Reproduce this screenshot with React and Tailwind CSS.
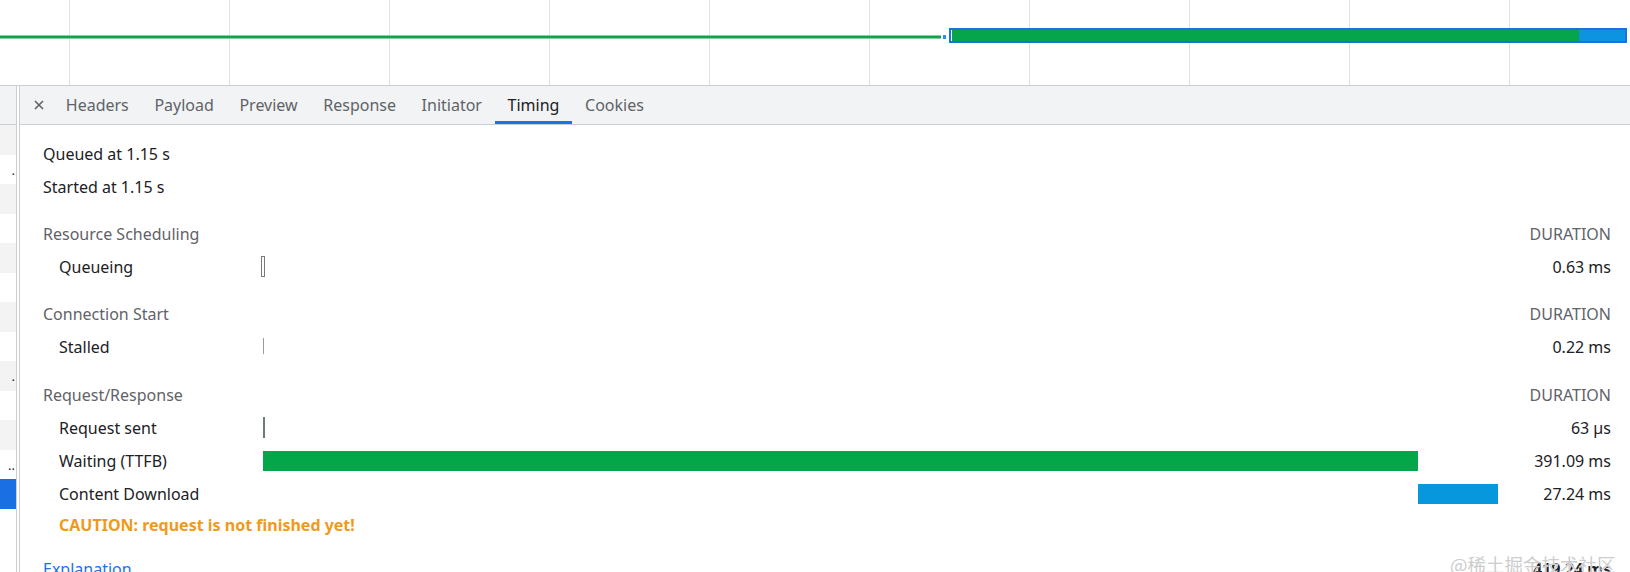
import React from "react";

const FONT = { fontFamily: '"Noto Sans", "Open Sans", sans-serif' };

const gridXs = [69, 229, 389, 549, 709, 869, 1029, 1189, 1349, 1509];

function Overview() {
  return (
    <div className="relative h-[86px] w-full border-b border-[#cacdd1] bg-white">
      {gridXs.map((x) => (
        <div
          key={x}
          className="absolute top-0 h-full w-px bg-[#e3e3e3]"
          style={{ left: x }}
        />
      ))}
      {/* request line before selected */}
      <div className="absolute left-0 top-[35px] h-[4px] w-[941px] border-y border-[#7fd19f] bg-[#14a04c]" />
      <div className="absolute left-[943px] top-[35px] h-[4px] w-[3px] bg-[#2d8cf0]" />
      {/* selected request bar */}
      <div className="absolute left-[949px] top-[28px] flex h-[15px] w-[678px] border-2 border-[#1f6fe0] bg-[#1f6fe0]">
        <div className="w-px bg-white" />
        <div className="h-full flex-1 bg-[#05a64b]" />
        <div className="h-full w-[46px] bg-[#0d94e0]" />
      </div>
    </div>
  );
}

function Strip() {
  const rows = [];
  for (let i = 0; i < 13; i++) {
    const selected = i === 12;
    const gray = i % 2 === 0;
    const dot = i === 1 ? "." : i === 8 ? "." : i === 11 ? ".." : "";
    rows.push(
      <div
        key={i}
        className={
          "relative h-[29.5px] " +
          (selected ? "bg-[#1a6fe3]" : gray ? "bg-[#f3f3f3]" : "bg-white")
        }
      >
        {dot && (
          <span className="absolute right-[1px] top-[9px] text-[13px] leading-none text-[#202124]">
            {dot}
          </span>
        )}
      </div>
    );
  }
  return (
    <div className="flex w-[17px] shrink-0 flex-col border-r border-[#cacdd1] bg-white">
      <div className="h-[39px] shrink-0 border-b border-[#cacdd1] bg-[#f1f3f4]" />
      {rows}
    </div>
  );
}

const tabs = ["Headers", "Payload", "Preview", "Response", "Initiator", "Timing", "Cookies"];

function TabBar() {
  return (
    <div className="flex h-[39px] shrink-0 items-stretch border-b border-[#cacdd1] bg-[#f1f3f4]">
      <div className="flex w-[33px] items-center justify-end pr-[9px]">
        <svg width="10" height="10" viewBox="0 0 10 10">
          <path d="M1 1 L9 9 M9 1 L1 9" stroke="#5f6368" strokeWidth="1.6" />
        </svg>
      </div>
      {tabs.map((t) => {
        const active = t === "Timing";
        return (
          <div
            key={t}
            className={
              "relative flex items-center px-[12.8px] text-[16px] " +
              (active ? "text-[#202124]" : "text-[#5f6368]")
            }
          >
            {t}
            {active && (
              <div className="absolute bottom-0 left-0 right-0 h-[3px] bg-[#1a73e8]" />
            )}
          </div>
        );
      })}
    </div>
  );
}

const TOTAL = 419.24;
const BAR_W = 1238;

function Bar({ kind, start, dur }) {
  const left = (start / TOTAL) * BAR_W;
  const width = (dur / TOTAL) * BAR_W;
  if (kind === "queue") {
    return (
      <div
        className="absolute top-[6px] h-[21px] w-[4px] border border-[#7a7a7a] bg-white"
        style={{ left: left - 2 }}
      />
    );
  }
  if (kind === "stall") {
    return (
      <div
        className="absolute top-[8px] h-[16px] w-px bg-[#9a9a9a]"
        style={{ left: left }}
      />
    );
  }
  if (kind === "sent") {
    return (
      <div
        className="absolute top-[6px] h-[21px] w-[2px] bg-[#6b7b78]"
        style={{ left: left }}
      />
    );
  }
  return (
    <div
      className={
        "absolute top-[7px] h-[20px] " +
        (kind === "wait" ? "bg-[#04a64a]" : "bg-[#0797dc]")
      }
      style={{ left: left, width: width }}
    />
  );
}

function Row({ label, bar, value }) {
  return (
    <div className="flex h-[33px] items-center text-[16px] text-[#202124]">
      <div className="w-[220px] shrink-0 pl-[16px]">{label}</div>
      <div className="relative h-full flex-1">{bar}</div>
      <div className="w-[110px] shrink-0 text-right">{value}</div>
    </div>
  );
}

function Section({ title, mt }) {
  return (
    <div
      className={
        "flex h-[33px] items-center justify-between text-[16px] text-[#5f6368] " + mt
      }
    >
      <span>{title}</span>
      <span>DURATION</span>
    </div>
  );
}

function Timing() {
  return (
    <div className="flex-1 bg-white pl-[23px] pr-[19px] pt-[12px]">
      <div className="flex h-[33px] items-center text-[16px] text-[#202124]">Queued at 1.15 s</div>
      <div className="flex h-[33px] items-center text-[16px] text-[#202124]">Started at 1.15 s</div>

      <Section title="Resource Scheduling" mt="mt-[14px]" />
      <Row label="Queueing" value="0.63 ms" bar={<Bar kind="queue" start={0} dur={0.63} />} />

      <Section title="Connection Start" mt="mt-[14px]" />
      <Row label="Stalled" value="0.22 ms" bar={<Bar kind="stall" start={0} dur={0.22} />} />

      <Section title="Request/Response" mt="mt-[15px]" />
      <Row label="Request sent" value="63 µs" bar={<Bar kind="sent" start={0} dur={0.063} />} />
      <Row label="Waiting (TTFB)" value="391.09 ms" bar={<Bar kind="wait" start={0} dur={391.09} />} />
      <Row
        label="Content Download"
        value="27.24 ms"
        bar={<Bar kind="dl" start={391.09} dur={27.24} />}
      />
      <div className="flex h-[30px] items-center pl-[16px] text-[16px] font-bold text-[#f09a1a]">
        CAUTION: request is not finished yet!
      </div>
      <div className="mt-[12px] flex h-[33px] items-center justify-between text-[16px]">
        <span className="text-[#1a73e8]">Explanation</span>
        <span className="font-bold text-[#202124]">419.24 ms</span>
      </div>
    </div>
  );
}

export default function App() {
  return (
    <div className="relative h-[572px] w-[1630px] overflow-hidden bg-white" style={FONT}>
      <Overview />
      <div className="flex h-[486px]">
        <Strip />
        <div className="w-[2px] shrink-0 bg-white" />
        <div className="flex flex-1 flex-col border-l border-[#cacdd1]">
          <TabBar />
          <Timing />
        </div>
      </div>
      <div
        className="pointer-events-none absolute left-[1450px] top-[555px] text-[18.5px] leading-none text-[#cdcdcd]"
        style={{
          fontFamily: '"Noto Sans CJK SC", sans-serif',
          textShadow: "0 0 1px #fff",
        }}
      >
        @稀土掘金技术社区
      </div>
    </div>
  );
}
